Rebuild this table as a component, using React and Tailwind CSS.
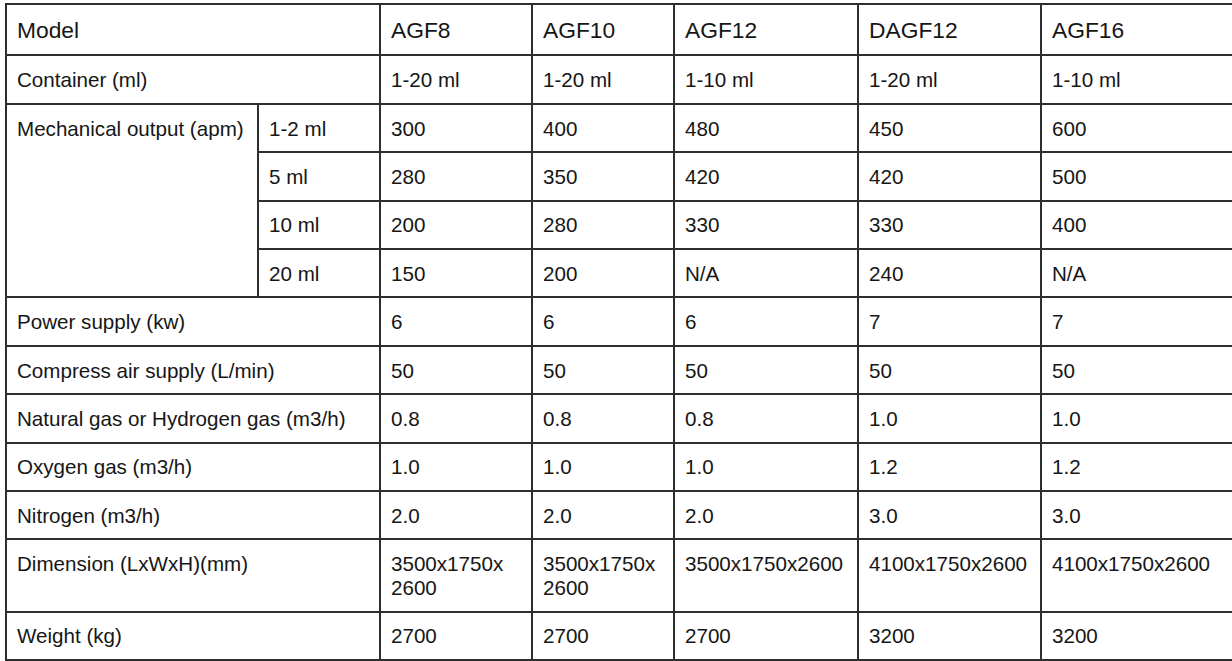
const models = ["AGF8", "AGF10", "AGF12", "DAGF12", "AGF16"];

const outputRows = [
  { size: "1-2 ml", values: ["300", "400", "480", "450", "600"] },
  { size: "5 ml", values: ["280", "350", "420", "420", "500"] },
  { size: "10 ml", values: ["200", "280", "330", "330", "400"] },
  { size: "20 ml", values: ["150", "200", "N/A", "240", "N/A"] },
];

const specRows = [
  { label: "Power supply (kw)", values: ["6", "6", "6", "7", "7"] },
  { label: "Compress air supply (L/min)", values: ["50", "50", "50", "50", "50"] },
  { label: "Natural gas or Hydrogen gas (m3/h)", values: ["0.8", "0.8", "0.8", "1.0", "1.0"] },
  { label: "Oxygen gas (m3/h)", values: ["1.0", "1.0", "1.0", "1.2", "1.2"] },
  { label: "Nitrogen (m3/h)", values: ["2.0", "2.0", "2.0", "3.0", "3.0"] },
];

const cell = "border-2 border-[#2e2e2e] px-[10px] align-top text-left font-normal";

function Cell({ children, className = "pt-[11.7px] pb-[10.7px]", ...rest }) {
  return (
    <td className={`${cell} ${className}`} {...rest}>
      {children}
    </td>
  );
}

const headPad = "pt-[12.5px] pb-[10px]";
const contPad = "pt-[11.6px] pb-[11.4px]";

export default function App() {
  return (
    <div
      className="w-[1232px] h-[661px] overflow-hidden bg-white pt-[2.5px] pl-[5px] text-[#161616]"
      style={{ fontFamily: 'Arial, "Liberation Sans", sans-serif' }}
    >
      <table className="border-collapse table-fixed w-[1240px] text-[20.6px] leading-[24px]">
        <colgroup>
          <col className="w-[252px]" />
          <col className="w-[122px]" />
          <col className="w-[152px]" />
          <col className="w-[142px]" />
          <col className="w-[184px]" />
          <col className="w-[183px]" />
          <col className="w-[205px]" />
        </colgroup>
        <tbody>
          <tr className="text-[22.8px] leading-[27px]">
            <Cell colSpan={2} className={headPad}>Model</Cell>
            {models.map((m) => (
              <Cell key={m} className={headPad}>{m}</Cell>
            ))}
          </tr>
          <tr>
            <Cell colSpan={2} className={contPad}>Container (ml)</Cell>
            {["1-20 ml", "1-20 ml", "1-10 ml", "1-20 ml", "1-10 ml"].map((v, i) => (
              <Cell key={i} className={contPad}>{v}</Cell>
            ))}
          </tr>
          {outputRows.map((row, idx) => (
            <tr key={row.size}>
              {idx === 0 && <Cell rowSpan={4}>Mechanical output (apm)</Cell>}
              <Cell>{row.size}</Cell>
              {row.values.map((v, i) => (
                <Cell key={i}>{v}</Cell>
              ))}
            </tr>
          ))}
          {specRows.map((row) => (
            <tr key={row.label}>
              <Cell colSpan={2} className="pt-[11.7px] pb-[10.7px] whitespace-nowrap">{row.label}</Cell>
              {row.values.map((v, i) => (
                <Cell key={i}>{v}</Cell>
              ))}
            </tr>
          ))}
          <tr>
            <Cell colSpan={2}>Dimension (LxWxH)(mm)</Cell>
            <Cell>3500x1750x<br />2600</Cell>
            <Cell>3500x1750x<br />2600</Cell>
            <Cell>3500x1750x2600</Cell>
            <Cell>4100x1750x2600</Cell>
            <Cell>4100x1750x2600</Cell>
          </tr>
          <tr>
            <Cell colSpan={2}>Weight (kg)</Cell>
            {["2700", "2700", "2700", "3200", "3200"].map((v, i) => (
              <Cell key={i}>{v}</Cell>
            ))}
          </tr>
        </tbody>
      </table>
    </div>
  );
}
